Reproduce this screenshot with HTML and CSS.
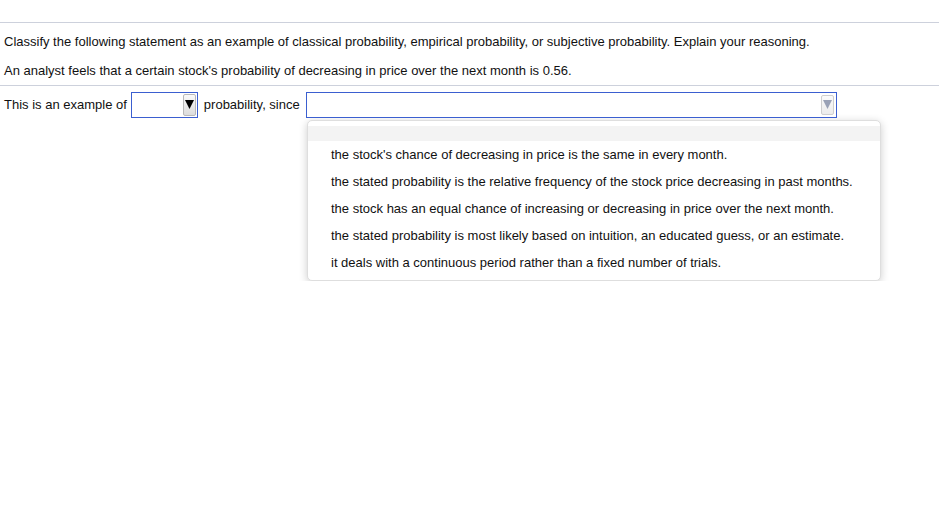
FILE: index.html
```html
<!DOCTYPE html>
<html lang="en">
<head>
    <meta charset="UTF-8">
    <title>Probability question</title>
    <link rel="stylesheet" href="styles.css">
</head>
<body>
    <div class="rule"></div>
    <div class="question">
        <p class="prompt">Classify the following statement as an example of classical probability, empirical probability, or subjective probability. Explain your reasoning.</p>
        <p class="statement">An analyst feels that a certain stock's probability of decreasing in price over the next month is 0.56.</p>
    </div>
    <div class="answer">
        <span class="label">This is an example of</span>
        <div class="select small">
            <span class="arrow">
                <svg width="9" height="10" viewBox="0 0 9 10"><path d="M0 1 H9 L4.5 10 Z" fill="#000"/></svg>
            </span>
        </div>
        <span class="label">probability, since</span>
        <div class="select wide">
            <span class="arrow off">
                <svg width="9" height="10" viewBox="0 0 9 10"><path d="M0 1 H9 L4.5 10 Z" fill="#9aa2b6"/></svg>
            </span>
        </div>
    </div>
    <div class="choices">
        <div class="choices-blank"></div>
        <div class="choice">the stock's chance of decreasing in price is the same in every month.</div>
        <div class="choice">the stated probability is the relative frequency of the stock price decreasing in past months.</div>
        <div class="choice">the stock has an equal chance of increasing or decreasing in price over the next month.</div>
        <div class="choice">the stated probability is most likely based on intuition, an educated guess, or an estimate.</div>
        <div class="choice">it deals with a continuous period rather than a fixed number of trials.</div>
    </div>
</body>
</html>
```

FILE: styles.css
```css
body {
    margin: 0;
    font-family: "Liberation Sans", Arial, sans-serif;
    font-size: 13px;
    color: #111;
    background: #fff;
}
.rule {
    margin-top: 22px;
    border-top: 1px solid #cdd1dc;
}
.question {
    padding: 0 4px;
    border-bottom: 1px solid #cdd1dc;
}
.question p {
    margin: 0;
    line-height: 15px;
}
.prompt {
    padding-top: 11px;
}
.statement {
    padding-top: 14px;
    padding-bottom: 7px;
}
.answer {
    display: flex;
    align-items: flex-start;
    padding: 6px 4px 0;
}
.label {
    line-height: 26px;
    margin-right: 4px;
}
.select {
    box-sizing: border-box;
    height: 26px;
    border: 1px solid #3b5fd0;
    background: #fff;
    text-align: right;
    padding: 1px 1px 0 0;
    margin-right: 6px;
}
.select.small {
    width: 67px;
}
.select.wide {
    width: 531px;
    margin-left: 2px;
    padding: 2px 2px 0 0;
}
.arrow {
    display: inline-block;
    box-sizing: border-box;
    width: 13px;
    height: 22px;
    border: 1px solid #b9b9b9;
    border-radius: 2px;
    background: linear-gradient(#fafafa, #dcdcdc);
    text-align: center;
    padding-top: 4px;
    line-height: 0;
}
.arrow.off {
    height: 20px;
    padding-top: 3px;
    border-color: #cfcfcf;
    background: linear-gradient(#fbfbfb, #ececec);
}
.choices {
    width: 574px;
    box-sizing: border-box;
    margin: 2px 0 0 307px;
    padding: 5px 0 4px;
    background: #fff;
    border: 1px solid #dedede;
    border-radius: 5px;
    box-shadow: 0 2px 8px rgba(0, 0, 0, 0.2);
}
.choices-blank {
    height: 15px;
    background: #f3f3f3;
}
.choice {
    height: 27px;
    line-height: 27px;
    padding-left: 23px;
    white-space: nowrap;
}
```
